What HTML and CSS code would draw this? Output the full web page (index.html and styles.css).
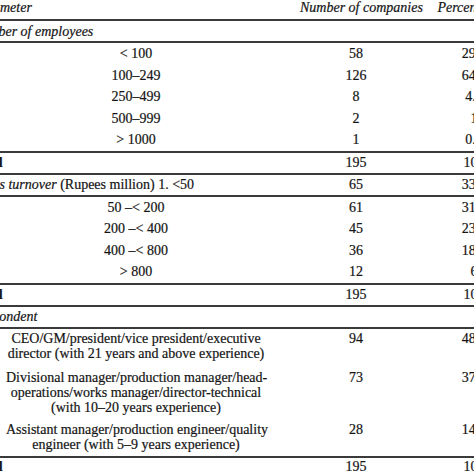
FILE: index.html
```html
<!DOCTYPE html>
<html>
<head>
<meta charset="utf-8">
<link rel="stylesheet" href="styles.css">
</head>
<body>
<div class="page">
<table class="tbl">
  <colgroup><col class="c1"><col class="c2"><col class="c3"></colgroup>
  <tr class="head rule">
    <th class="left">Parameter</th>
    <th class="num-head">Number of companies</th>
    <th class="pct-head">Percentage</th>
  </tr>
  <tr class="grp rule">
    <td class="left"><i>Number of employees</i></td><td></td><td></td>
  </tr>
  <tr class="data"><td>&lt; 100</td><td>58</td><td>29.7</td></tr>
  <tr class="data"><td>100–249</td><td>126</td><td>64.6</td></tr>
  <tr class="data"><td>250–499</td><td>8</td><td>4.1</td></tr>
  <tr class="data"><td>500–999</td><td>2</td><td>1</td></tr>
  <tr class="data rule"><td>&gt; 1000</td><td>1</td><td>0.5</td></tr>
  <tr class="grp rule"><td class="left"><b>Total</b></td><td>195</td><td>100</td></tr>
  <tr class="grp rule">
    <td class="left"><i>Gross turnover</i> (Rupees million) 1. &lt;50</td><td>65</td><td>33.3</td>
  </tr>
  <tr class="data"><td>50 –&lt; 200</td><td>61</td><td>31.3</td></tr>
  <tr class="data"><td>200 –&lt; 400</td><td>45</td><td>23.1</td></tr>
  <tr class="data"><td>400 –&lt; 800</td><td>36</td><td>18.5</td></tr>
  <tr class="data rule"><td>&gt; 800</td><td>12</td><td>6</td></tr>
  <tr class="grp rule"><td class="left"><b>Total</b></td><td>195</td><td>100</td></tr>
  <tr class="grp rule"><td class="left"><i>Respondent</i></td><td></td><td></td></tr>
  <tr class="multi first">
    <td class="wrap">CEO/GM/president/vice president/executive<br>director (with 21 years and above experience)</td>
    <td>94</td><td>48.2</td>
  </tr>
  <tr class="multi">
    <td class="wrap">Divisional manager/production manager/head-<br>operations/works manager/director-technical<br>(with 10–20 years experience)</td>
    <td>73</td><td>37.4</td>
  </tr>
  <tr class="multi rule">
    <td class="wrap">Assistant manager/production engineer/quality<br>engineer (with 5–9 years experience)</td>
    <td>28</td><td>14.4</td>
  </tr>
  <tr class="grp last"><td class="left"><b>Total</b></td><td>195</td><td>100</td></tr>
</table>
</div>
</body>
</html>
```

FILE: styles.css
```css
html, body {
  margin: 0;
  padding: 0;
  background: #fff;
}

.page {
  width: 474px;
  height: 474px;
  overflow: hidden;
  background: #fff;
}

.tbl {
  margin-left: -28px;
  margin-top: -3px;
  width: 564px;
  table-layout: fixed;
  border-collapse: collapse;
  font-family: "Liberation Serif", "Times New Roman", serif;
  font-size: 14px;
  line-height: 15px;
  color: #141414;
  -webkit-text-stroke: 0.2px #141414;
}

.c1 { width: 328px; }
.c2 { width: 112px; }
.c3 { width: 124px; }

.tbl th,
.tbl td {
  padding: 0;
  text-align: center;
  vertical-align: top;
  white-space: nowrap;
}

.tbl th {
  font-weight: normal;
  font-style: italic;
}

.tbl .left {
  text-align: left;
}

.tbl .num-head {
  padding-right: 7px;
}

.tbl .pct-head {
  padding-right: 10px;
}

.head th {
  padding-top: 2.5px;
  padding-bottom: 4.5px;
}

.grp td {
  padding-top: 2.5px;
  padding-bottom: 2.5px;
}

.grp.last td {
  padding-top: 1px;
}

.data td {
  padding-top: 3px;
  padding-bottom: 3.5px;
}

.multi td {
  padding-top: 3px;
  padding-bottom: 4px;
}

.multi.first td {
  padding-top: 2px;
  padding-bottom: 6px;
}

.multi td.wrap {
  padding-left: 34px;
  padding-right: 34px;
}

.rule td,
.rule th {
  border-bottom: 2px solid #3a3a3a;
}
```
